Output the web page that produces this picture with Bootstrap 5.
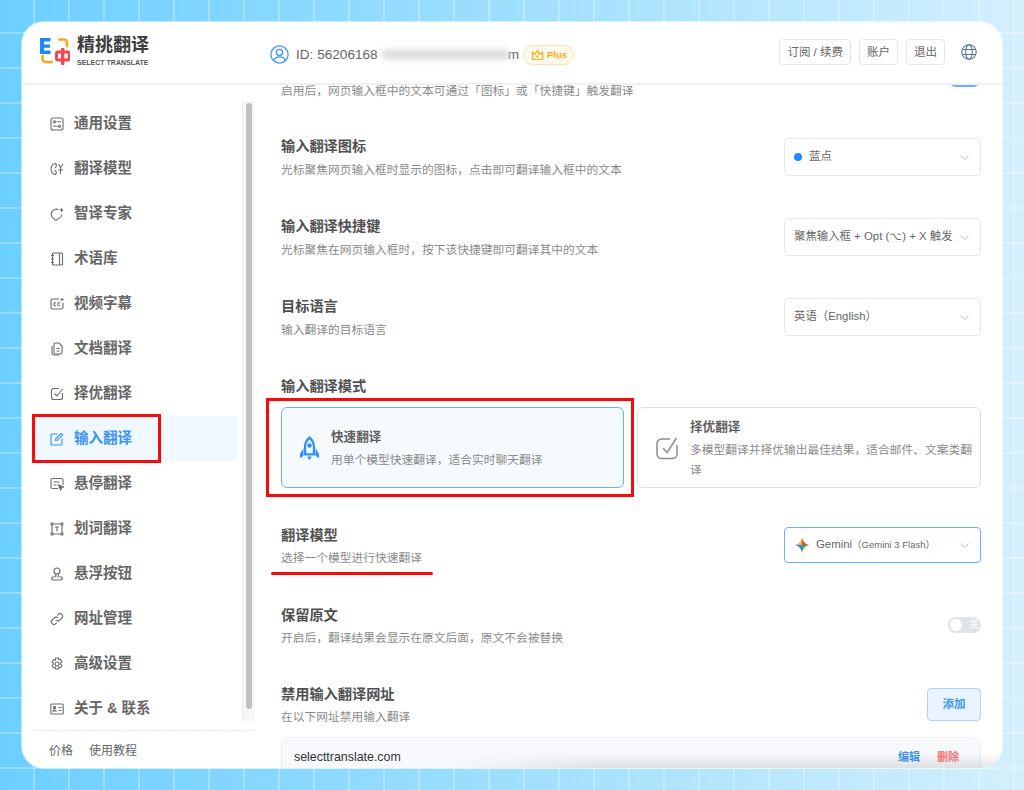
<!DOCTYPE html>
<html lang="zh-CN">
<head>
  <meta charset="UTF-8">
  <title>精挑翻译 设置</title>
  <link href="https://cdn.jsdelivr.net/npm/bootstrap@5.3.0/dist/css/bootstrap.min.css" rel="stylesheet">
  <style>
    body {
      height: 100vh;
      padding: 22px;
      overflow: hidden;
      font-family: "Liberation Sans", "Noto Sans CJK SC", sans-serif;
      background-color: #8fdcff;
      background-image:
        linear-gradient(rgba(255,255,255,.28) 2px, transparent 2px),
        linear-gradient(90deg, rgba(255,255,255,.28) 2px, transparent 2px),
        linear-gradient(90deg, #6bcfff, #d3effd);
      background-size: 35px 35px, 35px 35px, 100% 100%;
      background-position: 0 -3px, -2px 0, 0 0;
    }
    .app-window {
      position: relative;
      height: 100%;
      background: #fff;
      border-radius: 22px;
      overflow: hidden;
      box-shadow: 0 0 0 1px rgba(255,255,255,.5);
    }
    .app-head { height: 63px; border-bottom: 2px solid #f0f1f5; padding: 0 25px 2px 18px; }
    .logo-ico { margin-bottom: 2px; }
    .logo-name { font-size: 18px; font-weight: 700; color: #3c3c3c; line-height: 20px; white-space: nowrap; }
    .logo-sub { font-size: 7px; font-weight: 700; color: #555; line-height: 10px; margin-top: 3px; white-space: nowrap; }
    .logo-box { width: 72px; margin-left: 7px; }
    .user-box { margin-left: 121px; padding-top: 7px; color: #666; font-size: 13.6px; }
    .user-ico { margin-right: 7px; }
    .email-blur { width: 129px; height: 9px; margin-left: 4px; background: #d9d9d9; border-radius: 5px; filter: blur(3px); }
    .email-end { margin-left: -3px; }
    .plus-tag {
      width: 51px; height: 20px; margin-left: 4px; padding-left: 7px;
      background: #fff8ec; border: 1px solid #ffe0ae; border-radius: 10px;
      color: #faad14; font-size: 9.5px; font-weight: 700; gap: 3px;
    }
    .head-btn {
      height: 26px; padding: 0 7px; font-size: 11.5px; line-height: 24px; color: #666;
      background: #fff; border: 1px solid #e4e6ec; border-radius: 4px;
    }
    .app-body { height: 683px; }
    .side-col { width: 233px; flex: none; }
    .side-list { padding: 16px 0 0 10px; height: 645px; }
    .side-nav { width: 209px; padding-right: 4px; }
    .side-link {
      height: 45px; flex-shrink: 0; padding: 0 0 0 18px; gap: 10px;
      color: #666; font-size: 14.5px; font-weight: 700;
    }
    .side-link svg { width: 14px; height: 14px; flex: none; fill: none; stroke: #6b6b6b; stroke-width: 1.1; }
    .side-link.on { color: #3b94f7; background: #eff7ff; }
    .side-link.on svg { stroke: #3b94f7; }
    .side-track { width: 13px; height: 620px; margin-left: 1px; padding: 2px 3px 0; background: #f7f7f7; border-left: 1px solid #ececec; }
    .side-thumb { height: 606px; background: #c1c1c1; border-radius: 4px; }
    .side-foot { height: 38px; margin-left: 11px; border-top: 1px dashed #e3e3e3; padding: 11px 0 0 16px; gap: 16px; font-size: 12px; color: #666; }
    .main-col { overflow: hidden; padding: 0 21px 0 26px; }
    .first-row { height: 32px; }
    .first-desc { font-size: 11.75px; line-height: 12px; color: #8a8a8a; }
    .set-row { height: 80px; }
    .set-title { font-size: 14.2px; font-weight: 700; line-height: 20px; color: #505050; }
    .set-desc { font-size: 11.75px; line-height: 20px; margin-top: 3px; color: #8a8a8a; }
    .top-row .set-title { margin-top: 1px; }
    .top-row .set-desc { margin-top: 4px; }
    .fake-select {
      width: 197px; height: 38px; padding: 0 11px 0 9px; font-size: 11.4px; color: #666; white-space: nowrap;
      border: 1px solid #e6e8ed; border-radius: 4px;
    }
    .fake-select.on { height: 36px; margin-top: -2px; border-color: #69b1ff; }
    .chev { width: 9px; height: 5px; flex: none; fill: none; stroke: #c8c8c8; stroke-width: 1; }
    .blue-dot { width: 8px; height: 8px; margin-right: 7px; background: #1e8bff; border-radius: 50%; }
    .star-ico { margin-right: 6px; }
    .model-sub { font-size: 9.5px; }
    .switch-off { width: 33px; height: 16px; margin-top: -2px; background: #e0e3ea; border-radius: 8px; padding: 0 2px; color: #fff; font-size: 10px; line-height: 16px; }
    .switch-off i { width: 12px; height: 12px; background: #fff; border-radius: 50%; }
    .switch-on { margin-top: -14px; background: #69b1ff; }
    .mode-head { height: 20px; margin-top: 19px; }
    .mode-cards { gap: 13px; margin-top: 11px; }
    .mode-card { width: 344px; height: 81px; padding: 1px 6px 0 18px; gap: 12px; border: 1px solid #dedede; border-radius: 6px; }
    .mode-card.on { width: 343px; padding-top: 2px; background: #f5faff; border-color: #69b1ff; }
    .mode-name { font-size: 12.6px; font-weight: 700; line-height: 20px; color: #5f5f5f; }
    .mode-text { font-size: 11.75px; line-height: 20px; color: #8a8a8a; margin-top: 3px; }
    .model-row { margin-top: 18px; }
    .block-row { padding-top: 18px; }
    .add-btn { width: 54px; height: 33px; margin-top: 4px; padding: 0; font-size: 11.5px; font-weight: 700; color: #3b94f7; background: #eaf4ff; border: 1px solid #abd3ff; border-radius: 4px; }
    .site-item { height: 40px; margin-top: 10px; padding: 0 21px 0 12px; background: #f8f9fc; border: 1px solid #e9f1fc; border-radius: 8px; font-size: 12.4px; color: #333; }
    .site-act { gap: 17px; font-size: 11px; font-weight: 700; color: #3b94f7; }
    .site-act .del { color: #f47a7a; }
    .mark-box { position: absolute; border: 3px solid #f60a0a; }
    .mark-nav { left: 10px; top: 392px; width: 129px; height: 49px; }
    .mark-card { left: 244px; top: 376px; width: 368px; height: 99px; }
    .mark-line { position: absolute; left: 249px; top: 550px; width: 162px; height: 3px; background: #f60a0a; border-radius: 2px; }
    .edge-fade {
      position: absolute; left: 420px; right: 0; bottom: 0; height: 16px;
      background: linear-gradient(to top, rgba(90,90,100,.16), transparent);
      -webkit-mask-image: linear-gradient(90deg, transparent, #000 30%);
      mask-image: linear-gradient(90deg, transparent, #000 30%);
    }
  </style>
</head>
<body>
  <div class="app-window">
    <!-- Header -->
    <header class="app-head d-flex align-items-center">
      <svg width="30" height="31" viewBox="0 0 30 31" class="logo-ico flex-shrink-0">
        <path d="M0 3h10.500v3.500H4v3h6v3.300H4v2.700h6.500V19H0z" fill="#1e88f5"/>
        <path d="M19 4.500h5a3 3 0 0 1 3 3V11" fill="none" stroke="#f7a823" stroke-width="2.600" stroke-linecap="round"/>
        <path d="M2.500 21v3a3 3 0 0 0 3 3H12" fill="none" stroke="#f7a823" stroke-width="2.600" stroke-linecap="round"/>
        <rect x="16.500" y="17" width="12.500" height="8" rx="1.200" fill="none" stroke="#f5474f" stroke-width="3"/>
        <rect x="21" y="13" width="3.400" height="17" rx="1" fill="#f5474f"/>
      </svg>
      <div class="logo-box flex-shrink-0">
        <div class="logo-name">精挑翻译</div>
        <div class="logo-sub">SELECT TRANSLATE</div>
      </div>
      <div class="user-box d-flex align-items-center">
        <svg width="19" height="19" viewBox="0 0 19 19" fill="none" stroke="#3b94f7" stroke-width="1.300" class="user-ico">
          <circle cx="9.500" cy="9.500" r="8.600"/>
          <circle cx="9.500" cy="7.500" r="3.100"/>
          <path d="M4 15.500c.6-2.600 2.600-3.700 5.500-3.700s4.900 1.100 5.500 3.700"/>
        </svg>
        <span>ID: 56206168</span>
        <div class="email-blur"></div>
        <span class="email-end">m</span>
        <div class="plus-tag d-flex align-items-center">
          <svg width="13" height="12" viewBox="0 0 13 12" fill="none" stroke="#faad14" stroke-width="1.200">
            <path d="M1.500 3l2.700 2.300L6.500 1.500l2.300 3.800L11.500 3v7.500h-10z"/>
            <circle cx="6.500" cy="7.500" r=".6" fill="#faad14"/>
          </svg>
          Plus
        </div>
      </div>
      <div class="ms-auto d-flex align-items-center">
        <button class="head-btn">订阅 / 续费</button>
        <button class="head-btn ms-2">账户</button>
        <button class="head-btn ms-2">退出</button>
        <svg width="16" height="16" viewBox="0 0 16 16" fill="none" stroke="#5d7598" stroke-width="1.100" class="ms-3">
          <circle cx="8" cy="8" r="7.200"/>
          <ellipse cx="8" cy="8" rx="3.300" ry="7.200"/>
          <path d="M1.300 5.500h13.400M1.300 10.500h13.400"/>
        </svg>
      </div>
    </header>

    <div class="app-body d-flex">
      <!-- Sidebar -->
      <aside class="side-col d-flex flex-column">
        <div class="side-list d-flex">
          <nav class="side-nav nav flex-column flex-nowrap">
            <a class="side-link text-decoration-none d-flex align-items-center">
              <svg viewBox="0 0 14 14"><rect x="1" y="1" width="12" height="12" rx="2"/><circle cx="4.500" cy="4.800" r="1"/><path d="M6.500 4.800H11M3 9.200h4.500"/><circle cx="9.500" cy="9.200" r="1"/></svg>通用设置</a>
            <a class="side-link text-decoration-none d-flex align-items-center">
              <svg viewBox="0 0 14 14"><path d="M5.500 1.500C3 1.500 1 4 1 7s2 5.500 4.500 5.500M5.500 1.500c1.500 1.500 1 3.500-.5 4.500M5.500 12.500C7 11 6.500 9 4.500 8"/><path d="M8.500 2l2 3.500L13 2M10.500 5.500V12M8 8h5"/></svg>翻译模型</a>
            <a class="side-link text-decoration-none d-flex align-items-center">
              <svg viewBox="0 0 14 14"><path d="M8.500 2.500A5 5 0 1 0 4.500 12l.5 1c1 .5 2 0 2.500-1C10 11.500 11.500 9.800 11.800 7.500"/><path d="M11.500 .5l.7 1.800 1.800.7-1.800.7-.7 1.800-.7-1.800L9 3l1.800-.7z" fill="#6b6b6b" stroke="none"/></svg>智译专家</a>
            <a class="side-link text-decoration-none d-flex align-items-center">
              <svg viewBox="0 0 14 14"><rect x="2.500" y="1" width="10" height="12" rx="1"/><path d="M9.500 1v12M1 3.500h3M1 7h3M1 10.500h3"/></svg>术语库</a>
            <a class="side-link text-decoration-none d-flex align-items-center">
              <svg viewBox="0 0 14 14"><path d="M9 2H2.500A1.500 1.500 0 0 0 1 3.500v7A1.500 1.500 0 0 0 2.500 12h9a1.500 1.500 0 0 0 1.500-1.500V6"/><path d="M6 6a1.500 1.500 0 1 0 0 2.500M10 6a1.500 1.500 0 1 0 0 2.500M12 1v3M10.500 2.500h3"/></svg>视频字幕</a>
            <a class="side-link text-decoration-none d-flex align-items-center">
              <svg viewBox="0 0 14 14"><path d="M2 4v7.500A1.500 1.500 0 0 0 3.500 13H9"/><path d="M4 2.500A1.500 1.500 0 0 1 5.500 1H9l3 3v6.500a1.500 1.500 0 0 1-1.500 1.500h-5A1.500 1.500 0 0 1 4 10.500zM6.500 6.500h3M6.500 9h3"/></svg>文档翻译</a>
            <a class="side-link text-decoration-none d-flex align-items-center">
              <svg viewBox="0 0 14 14"><path d="M12.500 6v4.500a2 2 0 0 1-2 2h-7a2 2 0 0 1-2-2v-7a2 2 0 0 1 2-2H9"/><path d="M4.500 6.500L7 9l5.500-7"/></svg>择优翻译</a>
            <a class="side-link on text-decoration-none d-flex align-items-center">
              <svg viewBox="0 0 14 14"><path d="M7.500 2H2a1 1 0 0 0-1 1v9a1 1 0 0 0 1 1h9a1 1 0 0 0 1-1V6.500"/><path d="M5.500 8.500l.4-2L11 1.500l1.600 1.600-5 5z"/></svg>输入翻译</a>
            <a class="side-link text-decoration-none d-flex align-items-center">
              <svg viewBox="0 0 14 14"><path d="M8 11.500H2.500a1.500 1.500 0 0 1-1.500-1.500V3a1.500 1.500 0 0 1 1.500-1.500h9A1.500 1.500 0 0 1 13 3v5M3.500 5h6M3.500 8h3"/><path d="M8.500 8l5 2-2 .8-.8 2.200z" fill="#6b6b6b"/></svg>悬停翻译</a>
            <a class="side-link text-decoration-none d-flex align-items-center">
              <svg viewBox="0 0 14 14"><path d="M3 2h8M3 12h8M2 3v8M12 3v8M5 5h4M7 5v4.500"/><circle cx="2" cy="2" r="1.100"/><circle cx="12" cy="2" r="1.100"/><circle cx="2" cy="12" r="1.100"/><circle cx="12" cy="12" r="1.100"/></svg>划词翻译</a>
            <a class="side-link text-decoration-none d-flex align-items-center">
              <svg viewBox="0 0 14 14"><circle cx="7" cy="4" r="3"/><path d="M5.800 7v3.500M8.200 7v3.500"/><path d="M4.500 9.500C2.500 10 1.500 11 1.500 11.700c0 1.100 1.500 1.300 5.500 1.300s5.500-.2 5.500-1.300c0-.7-1-1.700-3-2.200"/></svg>悬浮按钮</a>
            <a class="side-link text-decoration-none d-flex align-items-center">
              <svg viewBox="0 0 14 14"><path d="M6 8a2.500 2.500 0 0 0 3.700.2l2.200-2.200A2.600 2.600 0 0 0 8.200 2.300l-1 1"/><path d="M8 6a2.500 2.500 0 0 0-3.700-.2L2.100 8a2.600 2.600 0 0 0 3.700 3.700l1-1"/></svg>网址管理</a>
            <a class="side-link text-decoration-none d-flex align-items-center">
              <svg viewBox="0 0 14 14"><circle cx="7" cy="7" r="2"/><path d="M5.700 1h2.600l.5 1.700 1.600-.6 1.500 2.400-1.200 1.300v1.400l1.200 1.300-1.500 2.400-1.600-.6-.5 1.700H5.700l-.5-1.700-1.600.6-1.500-2.400 1.200-1.300V6.300L2.100 5l1.500-2.400 1.600.6z"/></svg>高级设置</a>
            <a class="side-link text-decoration-none d-flex align-items-center">
              <svg viewBox="0 0 14 14"><rect x=".8" y="2" width="12.400" height="10" rx="1"/><circle cx="4.500" cy="5.800" r="1.200" fill="#6b6b6b"/><path d="M2.500 9.500c.3-1.200 3.700-1.200 4 0M8.500 5.500h3M8.500 8.500h3"/></svg>关于 &amp; 联系</a>
          </nav>
          <div class="side-track flex-shrink-0">
            <div class="side-thumb"></div>
          </div>
        </div>
        <div class="side-foot d-flex">
          <span>价格</span>
          <span>使用教程</span>
        </div>
      </aside>

      <!-- Settings -->
      <main class="main-col flex-grow-1">
        <div class="first-row d-flex align-items-start justify-content-between">
          <div class="first-desc">启用后，网页输入框中的文本可通过「图标」或「快捷键」触发翻译</div>
          <div class="switch-off switch-on"></div>
        </div>

        <div class="set-row top-row d-flex align-items-center justify-content-between">
          <div>
            <div class="set-title">输入翻译图标</div>
            <div class="set-desc">光标聚焦网页输入框时显示的图标，点击即可翻译输入框中的文本</div>
          </div>
          <div class="fake-select d-flex align-items-center">
            <span class="blue-dot"></span><span>蓝点</span>
            <svg class="chev ms-auto" viewBox="0 0 9 5"><path d="M.4.400l4.100 4.100L8.600.400"/></svg>
          </div>
        </div>

        <div class="set-row top-row d-flex align-items-center justify-content-between">
          <div>
            <div class="set-title">输入翻译快捷键</div>
            <div class="set-desc">光标聚焦在网页输入框时，按下该快捷键即可翻译其中的文本</div>
          </div>
          <div class="fake-select d-flex align-items-center">
            <span>聚焦输入框 + Opt (⌥) + X 触发</span>
            <svg class="chev ms-auto" viewBox="0 0 9 5"><path d="M.4.400l4.100 4.100L8.600.400"/></svg>
          </div>
        </div>

        <div class="set-row top-row d-flex align-items-center justify-content-between">
          <div>
            <div class="set-title">目标语言</div>
            <div class="set-desc">输入翻译的目标语言</div>
          </div>
          <div class="fake-select d-flex align-items-center">
            <span>英语（English）</span>
            <svg class="chev ms-auto" viewBox="0 0 9 5"><path d="M.4.400l4.100 4.100L8.600.400"/></svg>
          </div>
        </div>

        <div class="set-title mode-head">输入翻译模式</div>
        <div class="mode-cards d-flex">
          <div class="mode-card on d-flex align-items-center">
            <svg width="19" height="25" viewBox="0 0 19 25" fill="#2f8ff5" class="flex-shrink-0">
              <path fill-rule="evenodd" d="M9.500 0C13.500 3 15 7 15 11v8.500H4v-8.500C4 7 5.500 3 9.500 0zM9.500 3.200C7.300 5.200 6.200 8 6.200 11v6.300h6.600V11c0-3-1.100-5.800-3.300-7.800z"/>
              <circle cx="9.500" cy="9.500" r="2.200"/>
              <path d="M3.500 12L0 18v4l3.500-2zM15.500 12l3.500 6v4l-3.500-2zM7 20.500h5l-2.500 3.500z"/>
            </svg>
            <div>
              <div class="mode-name">快速翻译</div>
              <div class="mode-text">用单个模型快速翻译，适合实时聊天翻译</div>
            </div>
          </div>
          <div class="mode-card d-flex align-items-center">
            <svg width="22" height="23" viewBox="0 0 22 23" fill="none" stroke="#8a8d93" stroke-width="1.500" class="flex-shrink-0">
              <path d="M21 8v9a4.500 4.500 0 0 1-4.500 4.500h-11A4.500 4.500 0 0 1 1 17V6.500A4.500 4.500 0 0 1 5.500 2H14"/>
              <path d="M7 11l4 4.500L20.500 1"/>
            </svg>
            <div>
              <div class="mode-name">择优翻译</div>
              <div class="mode-text">多模型翻译并择优输出最佳结果，适合邮件、文案类翻译</div>
            </div>
          </div>
        </div>

        <div class="set-row model-row d-flex align-items-center justify-content-between">
          <div>
            <div class="set-title">翻译模型</div>
            <div class="set-desc">选择一个模型进行快速翻译</div>
          </div>
          <div class="fake-select on d-flex align-items-center">
            <svg width="16" height="16" viewBox="0 0 16 16" class="star-ico flex-shrink-0">
              <path d="M8 0c.6 4.500 3.500 7.400 8 8H8z" fill="#ea4a3f"/>
              <path d="M8 0C7.400 4.500 4.500 7.400 0 8h8z" fill="#f2b632"/>
              <path d="M0 8c4.500.6 7.400 3.500 8 8V8z" fill="#3c7ff0"/>
              <path d="M16 8c-4.500.6-7.400 3.500-8 8V8z" fill="#2fb45a"/>
            </svg>
            <span>Gemini</span><span class="model-sub">（Gemini 3 Flash）</span>
            <svg class="chev ms-auto" viewBox="0 0 9 5"><path d="M.4.400l4.100 4.100L8.600.400"/></svg>
          </div>
        </div>

        <div class="set-row d-flex align-items-center justify-content-between">
          <div>
            <div class="set-title">保留原文</div>
            <div class="set-desc">开启后，翻译结果会显示在原文后面，原文不会被替换</div>
          </div>
          <div class="switch-off d-flex align-items-center justify-content-between">
            <i></i><span>关</span>
          </div>
        </div>

        <div class="block-row d-flex align-items-start justify-content-between">
          <div>
            <div class="set-title">禁用输入翻译网址</div>
            <div class="set-desc">在以下网址禁用输入翻译</div>
          </div>
          <button class="add-btn">添加</button>
        </div>
        <div class="site-item d-flex align-items-center justify-content-between">
          <span>selecttranslate.com</span>
          <div class="site-act d-flex"><span>编辑</span><span class="del">删除</span></div>
        </div>
      </main>
    </div>

    <!-- Annotations over the screenshot -->
    <div class="mark-box mark-nav"></div>
    <div class="mark-box mark-card"></div>
    <div class="mark-line"></div>
    <div class="edge-fade"></div>
  </div>

  <script src="https://cdn.jsdelivr.net/npm/bootstrap@5.3.0/dist/js/bootstrap.bundle.min.js"></script>
</body>
</html>
